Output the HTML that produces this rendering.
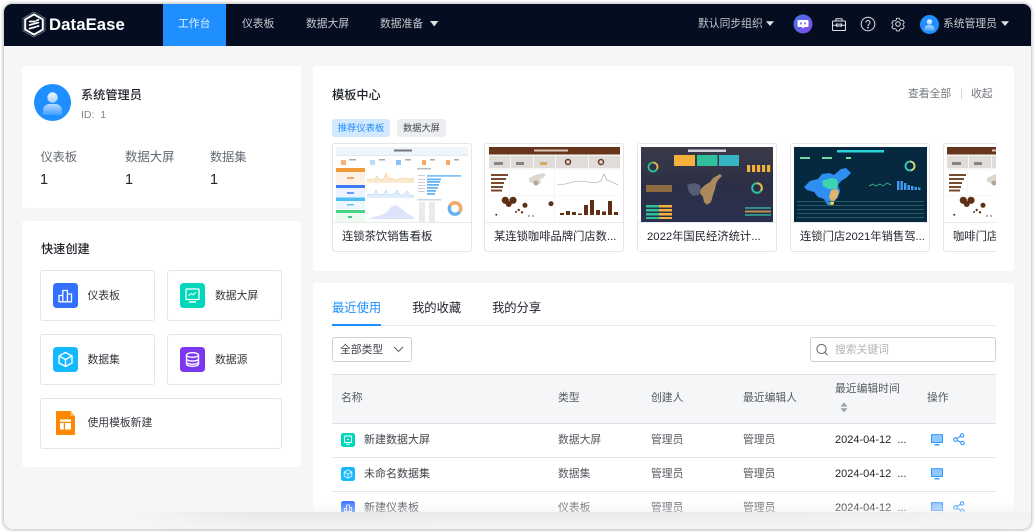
<!DOCTYPE html>
<html lang="zh">
<head>
<meta charset="utf-8">
<title>DataEase</title>
<style>
html,body{margin:0;padding:0;width:1035px;height:532px;overflow:hidden;background:#fff}
*{box-sizing:border-box}
body{position:relative;font-family:"Liberation Sans","Noto Sans CJK SC",sans-serif;color:#1f2329;filter:blur(.3px)}
.a{position:absolute;white-space:nowrap;line-height:1}
svg{position:absolute;display:block;overflow:hidden}
#win{position:absolute;left:4px;top:4px;width:1027px;height:525px;background:#f5f6f8;border-radius:8px 8px 9px 9px;box-shadow:0 0 3px 1px rgba(0,0,0,.28);overflow:hidden}
#nav{position:absolute;left:4px;top:4px;width:1027px;height:42px;background:#050e21;border-radius:8px 8px 0 0}
.card{position:absolute;background:#fff;border-radius:3px}
.nt{color:#c4c7cc;font-size:11.5px}
.btn{position:absolute;background:#fff;border:1px solid #e3e5e8;border-radius:3px}
.ic{position:absolute;width:25px;height:25px;border-radius:3.5px}
.bt{font-size:11.5px;color:#33373d}
.tc{position:absolute;top:143px;width:140px;height:109px;background:#fff;border:1px solid #e3e5e8;border-radius:3px;overflow:hidden}
.tc .d{position:absolute;left:0;right:0;top:78px;height:1px;background:#e8e9eb}
.tt{position:absolute;left:9px;top:88px;font-size:11.3px;line-height:1;color:#1f2329;white-space:nowrap}
.th{font-size:10.8px;color:#55595f}
.td{font-size:11px;color:#55595f}
.hl{position:absolute;left:332px;width:664px;height:1px;background:#e4e5e8}
</style>
</head>
<body>
<div id="win"></div>
<div id="nav"></div>

<!-- logo -->
<svg style="left:22px;top:11px" width="24" height="27" viewBox="0 0 24 27">
<path d="M12 1 L23 7.2 V19.8 L12 26 L1 19.8 V7.2Z" fill="none" stroke="#8d95a3" stroke-width=".6"/>
<path d="M12 3.4 L20.8 8.4 V18.6 L12 23.6 L3.2 18.6 V8.4Z" fill="none" stroke="#fff" stroke-width="2"/>
<path d="M7.5 10.5h5.5M14.5 9.5l2-.8M7.5 14l9-2.4M7.5 17.6l6-1.6M15 15.4l1.6-.4" stroke="#fff" stroke-width="1.7" fill="none" stroke-linecap="round"/>
</svg>
<div class="a" style="left:49px;top:16.5px;font-size:16.7px;font-weight:700;color:#fff;letter-spacing:.1px">DataEase</div>

<div style="position:absolute;left:163px;top:4px;width:63px;height:42px;background:#1f8fff"></div>
<div class="a" style="left:178px;top:19px;font-size:10.8px;color:#e4f1ff">工作台</div>
<div class="a nt" style="left:242px;top:19px;font-size:10.8px">仪表板</div>
<div class="a nt" style="left:306px;top:19px;font-size:10.8px">数据大屏</div>
<div class="a nt" style="left:380px;top:19px;font-size:10.8px">数据准备</div>
<svg style="left:430px;top:21px" width="9" height="6"><path d="M0 0H8.4L4.2 5.4Z" fill="#dfe1e4"/></svg>

<div class="a nt" style="left:698px;top:19px;font-size:10.8px">默认同步组织</div>
<svg style="left:766px;top:21px" width="9" height="6"><path d="M0 .2H8L4 5Z" fill="#dfe1e4"/></svg>
<svg style="left:793px;top:14px" width="20" height="20" viewBox="0 0 20 20">
<defs><linearGradient id="bg" x1="0" y1="0" x2="1" y2="1"><stop offset="0" stop-color="#3b7bf0"/><stop offset="1" stop-color="#8a43e6"/></linearGradient></defs>
<circle cx="10" cy="10" r="9.5" fill="url(#bg)"/>
<path d="M5.5 6h9a1 1 0 0 1 1 1v5a1 1 0 0 1-1 1h-3l-1.4 1.6L8.8 13H5.5a1 1 0 0 1-1-1V7a1 1 0 0 1 1-1Z" fill="#fff"/>
<rect x="7.2" y="8.4" width="1.6" height="2" fill="#6a5ae8"/><rect x="11.2" y="8.4" width="1.6" height="2" fill="#6a5ae8"/>
</svg>
<svg style="left:831px;top:17px" width="16" height="15" viewBox="0 0 16 15" fill="none" stroke="#dfe1e4" stroke-width="1">
<rect x="1.5" y="4" width="13" height="9.5" rx=".8"/>
<path d="M5 4V1.8h6V4M1.5 8.2h4M10.5 8.2h4"/><rect x="5.5" y="7" width="1.6" height="2.2"/><rect x="8.9" y="7" width="1.6" height="2.2"/>
</svg>
<svg style="left:860px;top:16px" width="16" height="16" viewBox="0 0 16 16" fill="none" stroke="#dfe1e4" stroke-width="1">
<circle cx="8" cy="8" r="6.8"/>
<path d="M6 6.4a2 2 0 1 1 3.1 1.7c-.8.5-1.1.9-1.1 1.7" stroke-linecap="round"/><circle cx="8" cy="11.6" r=".4" fill="#dfe1e4"/>
</svg>
<svg style="left:890px;top:16px" width="16" height="16" viewBox="0 0 16 16" fill="none" stroke="#dfe1e4" stroke-width="1">
<path d="M6.3 1.6h3.4l.5 1.8 1.7 1 1.8-.5 1.7 2.9-1.3 1.3v1.900l1.3 1.300-1.700 2.900-1.800-.5-1.700 1-.5 1.800H6.300l-.5-1.800-1.700-1-1.800.5L.6 11.800l1.300-1.300V8.600L.6 7.300l1.700-2.900 1.800.5 1.700-1Z" transform="translate(1.200 .9) scale(.85)" stroke-linejoin="round"/><circle cx="8" cy="8" r="2.300"/>
</svg>
<svg style="left:920px;top:15px" width="19" height="19" viewBox="0 0 37 37">
<defs><linearGradient id="pg" x1="0" y1="0" x2="0" y2="1"><stop offset="0" stop-color="#eef7ff"/><stop offset="1" stop-color="#a9d3ff"/></linearGradient>
<linearGradient id="pg2" x1="0" y1="0" x2="0" y2="1"><stop offset="0" stop-color="#b5daff"/><stop offset="1" stop-color="#3f9fff"/></linearGradient></defs>
<circle cx="18.5" cy="18.5" r="18.5" fill="#1f8fff"/><circle cx="18.5" cy="13.5" r="5.2" fill="url(#pg)"/><path d="M9 31v-4.500a6.500 6.500 0 0 1 6.500-6.500h6a6.500 6.500 0 0 1 6.500 6.500V31H9Z" fill="url(#pg2)"/>
</svg>
<div class="a nt" style="left:943px;top:19px;font-size:10.8px">系统管理员</div>
<svg style="left:1001px;top:21px" width="9" height="6"><path d="M0 .2H8L4 5Z" fill="#dfe1e4"/></svg>

<!-- profile card -->
<div class="card" style="left:22px;top:66px;width:279px;height:142px"></div>
<svg style="left:34px;top:84px" width="37" height="37" viewBox="0 0 37 37">
<circle cx="18.5" cy="18.5" r="18.5" fill="#1f8fff"/><circle cx="18.5" cy="13.5" r="5.2" fill="url(#pg)"/><path d="M9 31v-4.500a6.500 6.500 0 0 1 6.500-6.500h6a6.500 6.500 0 0 1 6.500 6.500V31H9Z" fill="url(#pg2)"/>
</svg>
<div class="a" style="left:81px;top:89px;font-size:12.2px;font-weight:500;color:#1f2329">系统管理员</div>
<div class="a" style="left:81px;top:110px;font-size:10.5px;color:#80848a">ID:&nbsp; 1</div>
<div class="a" style="left:40.5px;top:151px;font-size:12.2px;color:#646a73">仪表板</div>
<div class="a" style="left:125px;top:151px;font-size:12.4px;color:#646a73">数据大屏</div>
<div class="a" style="left:210px;top:151px;font-size:12.2px;color:#646a73">数据集</div>
<div class="a" style="left:40px;top:172.5px;font-size:14.5px;color:#1f2329">1</div>
<div class="a" style="left:125px;top:172.5px;font-size:14.5px;color:#1f2329">1</div>
<div class="a" style="left:210px;top:172.5px;font-size:14.5px;color:#1f2329">1</div>

<!-- quick create -->
<div class="card" style="left:22px;top:221px;width:279px;height:246px"></div>
<div class="a" style="left:41px;top:243px;font-size:12.2px;font-weight:500;color:#1f2329">快速创建</div>
<div class="btn" style="left:40px;top:270px;width:115px;height:51px"></div>
<div class="btn" style="left:167px;top:270px;width:115px;height:51px"></div>
<div class="btn" style="left:40px;top:334px;width:115px;height:51px"></div>
<div class="btn" style="left:167px;top:334px;width:115px;height:51px"></div>
<div class="btn" style="left:40px;top:398px;width:242px;height:51px"></div>

<div class="ic" style="left:53px;top:283px;background:#3370ff"></div>
<svg style="left:53px;top:283px" width="25" height="25" fill="none" stroke="#fff" stroke-width="1.3"><path d="M6 18.5V12.5H9.800M9.800 18.5V7.500H14.400V18.5M14.400 11H18.5V18.500M5.500 18.800H19"/></svg>
<div class="ic" style="left:180px;top:283px;background:#00d6b9"></div>
<svg style="left:180px;top:283px" width="25" height="25" fill="none" stroke="#fff" stroke-width="1.3"><rect x="6" y="6" width="13" height="10.500" rx=".6"/><path d="M8.500 12.800l2.500-2.300 2 1.400 3-2.800" stroke-width="1"/><path d="M9 19h7" stroke-width="1.500"/></svg>
<div class="ic" style="left:53px;top:347px;background:#14b8ff"></div>
<svg style="left:53px;top:347px" width="25" height="25" fill="none" stroke="#fff" stroke-width="1.4" stroke-linejoin="round"><path d="M12.500 5.500 19 9V16L12.500 19.500 6 16V9ZM6 9l6.500 3.500L19 9M12.500 12.500V19.500"/></svg>
<div class="ic" style="left:180px;top:347px;background:#7a39f0"></div>
<svg style="left:180px;top:347px" width="25" height="25" fill="none" stroke="#fff" stroke-width="1.4"><ellipse cx="12.500" cy="8" rx="6" ry="2.300"/><path d="M6.500 8v9c0 1.300 2.700 2.300 6 2.300s6-1 6-2.300V8M6.500 11.800c0 1.300 2.700 2.300 6 2.300s6-1 6-2.300M6.500 15c0 1.300 2.700 2.300 6 2.300s6-1 6-2.300"/></svg>
<svg style="left:56px;top:411px" width="20" height="24" viewBox="0 0 20 24"><path d="M1 0H14.500L19 5V23a1 1 0 0 1-1 1H1a1 1 0 0 1-1-1V1a1 1 0 0 1 1-1Z" fill="#ff8800"/><path d="M14.500 0 19 5H14.500Z" fill="#ffb866"/><path d="M4 8.500H15V10.800H4ZM4 12H7.800V18.500H4ZM9 12H15V18.500H9Z" fill="#fff"/></svg>

<div class="a bt" style="left:87.5px;top:290.500px;font-size:10.8px">仪表板</div>
<div class="a bt" style="left:215px;top:290.500px;font-size:10.8px">数据大屏</div>
<div class="a bt" style="left:87.5px;top:354.500px;font-size:10.8px">数据集</div>
<div class="a bt" style="left:215px;top:354.500px;font-size:10.8px">数据源</div>
<div class="a bt" style="left:87.5px;top:418px;font-size:10.8px">使用模板新建</div>

<!-- templates -->
<div class="card" style="left:313px;top:66px;width:701px;height:205px"></div>
<div class="a" style="left:332px;top:88.500px;font-size:12.2px;font-weight:500">模板中心</div>
<div class="a" style="left:908px;top:89px;font-size:10.8px;color:#73777d">查看全部</div>
<div style="position:absolute;left:961px;top:88px;width:1px;height:11px;background:#d5d7da"></div>
<div class="a" style="left:971px;top:89px;font-size:10.8px;color:#73777d">收起</div>
<div class="a" style="left:332px;top:119px;width:58px;height:18px;background:#d2e9fd;border-radius:3px;color:#1f8fff;font-size:9.3px;line-height:19px;text-align:center">推荐仪表板</div>
<div class="a" style="left:397px;top:119px;width:49px;height:18px;background:#ecedef;border-radius:3px;color:#41454b;font-size:9.2px;line-height:19px;text-align:center">数据大屏</div>

<svg width="0" height="0" style="left:0;top:0"><defs>
<symbol id="coffee" viewBox="0 0 131 75" overflow="hidden">
<rect width="131" height="75" fill="#f7f6f5"/>
<rect width="131" height="7.500" fill="#66351b"/>
<rect x="45" y="2.500" width="34" height="2" fill="#d9c6b9"/>
<g fill="#dfdcd9"><rect y="9" width="21" height="12"/><rect x="22" y="9" width="22" height="12"/><rect x="45" y="9" width="21" height="12"/><rect x="67" y="9" width="32" height="12"/><rect x="100" y="9" width="31" height="12"/></g>
<g fill="#8a8580"><rect x="5" y="15" width="9" height="3"/><rect x="27" y="15" width="8" height="3"/></g><rect x="51" y="15" width="7" height="3" fill="#d7a95a"/>
<g fill="none" stroke="#6b3a1e" stroke-width="1.500"><circle cx="79" cy="15" r="2.500"/><circle cx="112" cy="15" r="2.500"/></g>
<rect y="23" width="20" height="25" fill="#fff"/><rect x="21" y="23" width="44" height="25" fill="#fff"/><rect x="66" y="23" width="65" height="25" fill="#fff"/><rect y="49" width="65" height="26" fill="#fff"/><rect x="66" y="49" width="65" height="26" fill="#fff"/>
<g fill="#7a4a2e"><rect x="2" y="27" width="17" height="2"/><rect x="2" y="31" width="15" height="2"/><rect x="2" y="35" width="13" height="2"/><rect x="2" y="39" width="12" height="2"/><rect x="2" y="42.500" width="11" height="2"/></g>
<path d="M40 31l6-3 8-2 3 2-3 3-3 1 1 4-5 3-3-3-4-1Z" fill="#dcd7d0"/><circle cx="47" cy="36" r="2.500" fill="#b5a696"/>
<path d="M68 38l8-1 8-2 8-1 8 1 6 1 6-2 3-7 3 6 5 2 6 3" fill="none" stroke="#a89c94" stroke-width=".6"/>
<g fill="#5e2f16"><circle cx="16.300" cy="53.300" r="3.600"/><circle cx="24" cy="53.300" r="3.600"/><circle cx="19.700" cy="57" r="3"/><circle cx="36" cy="58.300" r="2.500"/><circle cx="62" cy="56.700" r="2.500"/><circle cx="29.700" cy="63" r="1.200"/><circle cx="27" cy="65" r="1"/><circle cx="33" cy="65.300" r="1.200"/><circle cx="7.300" cy="67.700" r="1"/><circle cx="40" cy="69" r=".7"/><circle cx="44" cy="69" r=".7"/></g>
<g fill="#5e2f16"><rect x="71" y="66" width="4" height="2"/><rect x="77" y="64" width="4" height="4"/><rect x="83" y="65" width="4" height="3"/><rect x="89" y="66.500" width="4" height="1.500"/><rect x="95" y="58" width="4" height="10"/><rect x="101" y="53" width="4" height="15"/><rect x="107" y="63" width="4" height="5"/><rect x="113" y="64.500" width="4" height="3.500"/><rect x="119" y="54" width="4" height="14"/><rect x="125" y="65" width="4" height="3"/></g>
</symbol>
<linearGradient id="dk" x1="0" y1="0" x2="0" y2="1"><stop offset="0" stop-color="#3a3a48"/><stop offset=".5" stop-color="#2c2f46"/><stop offset="1" stop-color="#2a3050"/></linearGradient>
</defs></svg>

<div class="tc" style="left:332px">
<svg style="left:3px;top:3px;filter:blur(.25px)" width="132" height="75" viewBox="0 0 132 75">
<rect width="132" height="75" fill="#fff"/><rect width="132" height="8" fill="#eef6fd"/><rect y="8" width="132" height=".7" fill="#cfe2f5"/>
<rect x="58" y="2.500" width="18" height="2" fill="#777"/>
<rect x="5" y="13" width="5" height="5" fill="#f7b27a"/><rect x="13" y="12" width="7" height="1.500" fill="#aaa"/>
<rect x="34" y="13" width="5" height="5" fill="#bcdcf7"/><rect x="43" y="12" width="6" height="1.500" fill="#aaa"/>
<rect x="60" y="13" width="5" height="5" fill="#8cc3f5"/><rect x="69" y="12" width="6" height="1.500" fill="#aaa"/>
<rect x="86" y="13" width="4" height="5" fill="#f7a862"/><rect x="94" y="12" width="5" height="1.500" fill="#aaa"/>
<rect x="110" y="13" width="4" height="5" fill="#f7a862"/><rect x="118" y="12" width="5" height="1.500" fill="#aaa"/>
<rect y="25" width="29" height="13" fill="#fdf1e6"/><rect y="21" width="29" height="4" fill="#f39a3a"/><rect x="11" y="30" width="7" height="2" fill="#f5a75c"/>
<rect y="41" width="29" height="10" fill="#eef4ff"/><rect y="38" width="29" height="3" fill="#3e7bf3"/><rect x="11" y="45" width="7" height="2" fill="#6a9cf5"/>
<rect y="54" width="29" height="8" fill="#ecf8fd"/><rect y="50.500" width="29" height="3.500" fill="#4cc0f2"/><rect x="11" y="57" width="7" height="1.500" fill="#66c7f2"/>
<rect y="66" width="29" height="9" fill="#edfaf2"/><rect y="63" width="29" height="3" fill="#47d488"/><rect x="12" y="69" width="4" height="2" fill="#47c47e"/>
<path d="M31 36V33l4-1 3 1 3-4 2 3 4 1 3-7 3 5 4 1 3 1 4-2 3 1 4-1 3 1 4-1V36Z" fill="#fbe9d0"/><path d="M31 33l4-1 3 1 3-4 2 3 4 1 3-7 3 5 4 1 3 1 4-2 3 1 4-1 3 1 4-1" fill="none" stroke="#f3c383" stroke-width=".5"/>
<path d="M31 51V48l5-1 2 1 2-5 2 4 5 1 3-5 3 5 5-1 3-4 3 5 4 0 3-4 3 4 4 1V51Z" fill="#e0eefb"/><path d="M31 48l5-1 2 1 2-5 2 4 5 1 3-5 3 5 5-1 3-4 3 5 4 0 3-4 3 4 4 1" fill="none" stroke="#a9d0f5" stroke-width=".5"/>
<path d="M33 71 42 69 50 66 55 60 60 58 66 62 72 67 78 70V72H33Z" fill="#dfe3fa"/>
<rect x="81" y="21" width="14" height="1.500" fill="#bbb"/>
<g fill="#64b3f4"><rect x="91" y="28" width="34" height="1.800" opacity=".8"/><rect x="91" y="31.500" width="14" height="1.800"/><rect x="91" y="34" width="13" height="1.800"/><rect x="91" y="37" width="12" height="1.800"/><rect x="91" y="40" width="11" height="1.800"/><rect x="91" y="43" width="9" height="1.800"/><rect x="91" y="46" width="8" height="1.800"/></g>
<g fill="#ccc"><rect x="82" y="28" width="7" height="1"/><rect x="82" y="32" width="7" height="1"/><rect x="82" y="35" width="7" height="1"/><rect x="82" y="38" width="7" height="1"/><rect x="82" y="41" width="7" height="1"/><rect x="82" y="44" width="7" height="1"/></g>
<rect x="81" y="52" width="24" height="1.500" fill="#c4d6e8"/><g fill="#ebebeb"><rect x="83" y="55" width="6" height="20"/><rect x="93" y="55" width="6" height="20"/></g>
<circle cx="119" cy="61.500" r="5.700" fill="none" stroke="#64b3f4" stroke-width="3.400"/><path d="M119 55.800a5.700 5.700 0 0 1 4.500 9.200" fill="none" stroke="#f7a862" stroke-width="3.400"/><path d="M114 59a5.700 5.700 0 0 1 5-3.200" fill="none" stroke="#f7a862" stroke-width="3.400"/>
</svg>
<div class="d"></div><div class="tt">连锁茶饮销售看板</div></div>

<div class="tc" style="left:484px">
<svg style="left:4px;top:3px;filter:blur(.25px)" width="131" height="75"><use href="#coffee" width="131" height="75"/></svg>
<div class="d"></div><div class="tt">某连锁咖啡品牌门店数...</div></div>

<div class="tc" style="left:637px">
<svg style="left:3px;top:3px;filter:blur(.25px)" width="132" height="75" viewBox="0 0 132 75">
<rect width="132" height="75" fill="url(#dk)"/>
<rect x="47" y="2.500" width="38" height="2.500" fill="#cfd2da"/>
<rect x="33" y="8" width="21" height="11" fill="#f6b13d"/><rect x="56" y="8" width="20.500" height="11" fill="#2fbf9a"/><rect x="78" y="8" width="20" height="11" fill="#36b5c4"/>
<circle cx="12" cy="20" r="4.500" fill="none" stroke="#2fbf9a" stroke-width="1.800"/><path d="M12 15.500a4.500 4.500 0 0 1 4 6.500" fill="none" stroke="#f6b13d" stroke-width="1.800"/>
<rect x="5" y="38" width="26" height="7" fill="#b5843f" opacity=".7"/>
<g fill="#2fbf9a"><rect x="5" y="58" width="13" height="2.500"/><rect x="5" y="62" width="13" height="2.500"/><rect x="5" y="66" width="13" height="2.500"/><rect x="5" y="70" width="13" height="2"/></g>
<g fill="#f6b13d"><rect x="18" y="58" width="13" height="2.500"/><rect x="18" y="62" width="13" height="2.500"/><rect x="18" y="66" width="13" height="2.500"/><rect x="18" y="70" width="13" height="2"/></g>
<path d="M46 38l7-2 6 2 1 5-2 5-6 1-4-4Z" fill="#565c74"/>
<path d="M60 42l4-4 5-3 3-4 7-4 2 2-4 4-2 4-1 5-2 6-2 7-4 3-3-3-1-5-3-4Z" fill="#b8935f" opacity=".9"/>
<g fill="#f6b13d"><rect x="106" y="18" width="3.200" height="7"/><rect x="111" y="18" width="3.200" height="7"/><rect x="116" y="18" width="3.200" height="7"/><rect x="121" y="18" width="3.200" height="7"/><rect x="126" y="18" width="3.200" height="7"/></g>
<circle cx="116" cy="41" r="4.800" fill="none" stroke="#2fbf9a" stroke-width="2"/><path d="M116 36.200a4.800 4.800 0 0 1 4 7.500" fill="none" stroke="#f6b13d" stroke-width="2"/>
<g fill="#2f8f86"><rect x="104" y="60" width="26" height="2"/><rect x="104" y="67" width="26" height="2"/></g><g fill="#b8914f"><rect x="104" y="63.500" width="26" height="2"/></g>
</svg>
<div class="d"></div><div class="tt">2022年国民经济统计...</div></div>

<div class="tc" style="left:790px">
<svg style="left:3px;top:3px;filter:blur(.25px)" width="133" height="75" viewBox="0 0 133 75">
<rect width="133" height="75" fill="#07293f"/>
<rect x="43" y="3" width="47" height="2.500" fill="#24d4d8"/>
<rect x="6" y="10" width="10" height="2" fill="#6fdc9a"/><rect x="28" y="10" width="10" height="2" fill="#6fdc9a"/><rect x="52" y="10" width="5" height="2" fill="#6fdc9a"/>
<path d="M10 40 16 34 24 32 28 27 35 26 40 28 47 22 52 21 57 26 52 31 47 34 44 38 46 44 44 50 40 55 35 59 32 56 30 52 24 50 20 45 13 43Z" fill="#2f8ff0"/>
<path d="M28 34l9-3 6 1 1 6-2 4-7 0-6-3Z" fill="#3fd4b0"/><path d="M37 43l6-1 2 3-2 6-5 4-3-5Z" fill="#e0b46a"/><path d="M36 55l4-1 0 3-3 2Z" fill="#f5cf3a"/>
<circle cx="116" cy="19" r="4.500" fill="none" stroke="#2fd0c0" stroke-width="1.800"/><path d="M116 14.500a4.500 4.500 0 0 1 1 8.900" fill="none" stroke="#e7d870" stroke-width="1.800"/>
<path d="M75 39l4-2 3 2 4-2 3 2 4-3 4 2" fill="none" stroke="#47d49a" stroke-width=".7"/>
<g fill="#3f9cf2"><rect x="103" y="34" width="2.400" height="9"/><rect x="106.500" y="34" width="2.400" height="9"/><rect x="110" y="36" width="2.400" height="7"/><rect x="113.500" y="38" width="2.400" height="5"/><rect x="117" y="39" width="2.400" height="4"/><rect x="120.500" y="40" width="2.400" height="3"/><rect x="124" y="40.500" width="2.400" height="2.500"/></g>
<g fill="#2b6a6e"><rect x="3" y="54" width="127" height=".8"/><rect x="3" y="58" width="127" height=".8"/><rect x="3" y="62" width="127" height=".8"/><rect x="3" y="66" width="127" height=".8"/><rect x="3" y="70" width="127" height=".8"/></g>
</svg>
<div class="d"></div><div class="tt">连锁门店2021年销售驾...</div></div>

<div style="position:absolute;left:943px;top:143px;width:53px;height:109px;overflow:hidden">
<div class="tc" style="left:0;top:0">
<svg style="left:3px;top:3px;filter:blur(.25px)" width="131" height="75"><use href="#coffee" width="131" height="75"/></svg>
<div class="d"></div><div class="tt">咖啡门店销售分析</div></div>
</div>

<!-- recent -->
<div class="card" style="left:313px;top:283px;width:701px;height:229px"></div>
<div class="a" style="left:332px;top:302px;font-size:12.3px;color:#1f8fff">最近使用</div>
<div class="a" style="left:412px;top:302px;font-size:12.3px;color:#1f2329">我的收藏</div>
<div class="a" style="left:492px;top:302px;font-size:12.3px;color:#1f2329">我的分享</div>
<div style="position:absolute;left:332px;top:325px;width:664px;height:1px;background:#e8e9eb"></div>
<div style="position:absolute;left:332px;top:324px;width:49px;height:2px;background:#1f8fff"></div>

<div style="position:absolute;left:332px;top:337px;width:80px;height:25px;background:#fff;border:1px solid #cdd0d4;border-radius:3px"></div>
<div class="a" style="left:340px;top:344.500px;font-size:10.8px;color:#41454b">全部类型</div>
<svg style="left:393px;top:346px" width="11" height="7" fill="none" stroke="#555a60" stroke-width=".9"><path d="M1 1l4.500 4.500L10 1"/></svg>
<div style="position:absolute;left:810px;top:337px;width:186px;height:25px;background:#fff;border:1px solid #cdd0d4;border-radius:3px"></div>
<svg style="left:815px;top:343px" width="14" height="14" fill="none" stroke="#5f6368" stroke-width="1"><circle cx="6.500" cy="6" r="4.600"/><path d="M10 9.500l2.600 2.600"/></svg>
<div class="a" style="left:835px;top:344.500px;font-size:10.8px;color:#b2b5b9">搜索关键词</div>

<div style="position:absolute;left:332px;top:375px;width:664px;height:49px;background:#f5f6f8"></div>
<div class="hl" style="top:374px;background:#dedfe2"></div>
<div class="hl" style="top:423px;background:#dedfe2"></div>
<div class="hl" style="top:457px"></div>
<div class="hl" style="top:491px"></div>

<div class="a th" style="left:341px;top:393px">名称</div>
<div class="a th" style="left:558px;top:393px">类型</div>
<div class="a th" style="left:651px;top:393px">创建人</div>
<div class="a th" style="left:743px;top:393px">最近编辑人</div>
<div class="a th" style="left:835px;top:384px">最近编辑时间</div>
<div class="a th" style="left:927px;top:393px">操作</div>
<svg style="left:840px;top:402px" width="8" height="11"><path d="M4 .5 7.500 4.500H.5ZM.5 6.300H7.500L4 10.300Z" fill="#9b9fa5"/></svg>

<!-- row icons -->
<svg style="left:341px;top:433px" width="14" height="14" viewBox="0 0 14 14"><rect width="14" height="14" rx="2.500" fill="#00d6b9"/><rect x="3.500" y="3" width="7" height="6.500" rx=".5" fill="none" stroke="#fff" stroke-width=".9"/><path d="M5 11.200H9M6 6.500h2" stroke="#fff" stroke-width=".9"/></svg>
<svg style="left:341px;top:467px" width="14" height="14" viewBox="0 0 14 14"><rect width="14" height="14" rx="2.500" fill="#14b8ff"/><path d="M7 2.800 10.800 5V9.200L7 11.300 3.200 9.200V5ZM3.200 5 7 7.200 10.800 5M7 7.200v4" fill="none" stroke="#fff" stroke-width=".8"/></svg>
<svg style="left:341px;top:501px" width="14" height="14" viewBox="0 0 14 14"><rect width="14" height="14" rx="2.500" fill="#3370ff"/><path d="M3.500 10.500V7.500H5.500V10.500M5.500 10.500V4H8.500V10.500M8.500 6.500H10.500V10.500M3 10.700H11" fill="none" stroke="#fff" stroke-width=".8"/></svg>

<div class="a td" style="left:364px;top:435px;color:#41454b">新建数据大屏</div>
<div class="a td" style="left:558px;top:435px;font-size:10.8px">数据大屏</div>
<div class="a td" style="left:651px;top:435px;font-size:10.8px">管理员</div>
<div class="a td" style="left:743px;top:435px;font-size:10.8px">管理员</div>
<div class="a td" style="left:835px;top:435px;color:#1f2329;font-size:11px">2024-04-12&nbsp; ...</div>

<div class="a td" style="left:364px;top:469px;color:#41454b">未命名数据集</div>
<div class="a td" style="left:558px;top:469px;font-size:10.8px">数据集</div>
<div class="a td" style="left:651px;top:469px;font-size:10.8px">管理员</div>
<div class="a td" style="left:743px;top:469px;font-size:10.8px">管理员</div>
<div class="a td" style="left:835px;top:469px;color:#1f2329;font-size:11px">2024-04-12&nbsp; ...</div>

<div class="a td" style="left:364px;top:503px;color:#41454b">新建仪表板</div>
<div class="a td" style="left:558px;top:503px;font-size:10.8px">仪表板</div>
<div class="a td" style="left:651px;top:503px;font-size:10.8px">管理员</div>
<div class="a td" style="left:743px;top:503px;font-size:10.8px">管理员</div>
<div class="a td" style="left:835px;top:503px;color:#1f2329;font-size:11px">2024-04-12&nbsp; ...</div>

<!-- action icons -->
<svg style="left:931px;top:434px" width="12" height="12" viewBox="0 0 12 12"><rect x=".5" y=".7" width="11" height="7.800" fill="#8fc7ff" stroke="#1f8fff" stroke-width=".9"/><path d="M3.500 10.800H8.500" stroke="#1f8fff" stroke-width="1.300"/></svg>
<svg style="left:953px;top:433px" width="12" height="13" viewBox="0 0 12 13" fill="none" stroke="#1f8fff" stroke-width="1"><circle cx="2.500" cy="6.500" r="1.800"/><circle cx="9" cy="2.500" r="1.700"/><circle cx="9.500" cy="10" r="1.700"/><path d="M4 5.500 7.500 3.300M4 7.500 8 9.300"/></svg>
<svg style="left:931px;top:468px" width="12" height="12" viewBox="0 0 12 12"><rect x=".5" y=".7" width="11" height="7.800" fill="#8fc7ff" stroke="#1f8fff" stroke-width=".9"/><path d="M3.500 10.800H8.500" stroke="#1f8fff" stroke-width="1.300"/></svg>
<svg style="left:931px;top:502px" width="12" height="12" viewBox="0 0 12 12"><rect x=".5" y=".7" width="11" height="7.800" fill="#8fc7ff" stroke="#1f8fff" stroke-width=".9"/><path d="M3.500 10.800H8.500" stroke="#1f8fff" stroke-width="1.300"/></svg>
<svg style="left:953px;top:501px" width="12" height="13" viewBox="0 0 12 13" fill="none" stroke="#1f8fff" stroke-width="1"><circle cx="2.500" cy="6.500" r="1.800"/><circle cx="9" cy="2.500" r="1.700"/><circle cx="9.500" cy="10" r="1.700"/><path d="M4 5.500 7.500 3.300M4 7.500 8 9.300"/></svg>

<!-- bottom fade and clipping -->
<div style="position:absolute;left:313px;top:500px;width:701px;height:12px;background:linear-gradient(to bottom,rgba(255,255,255,0),rgba(240,240,241,.5))"></div>
<div style="position:absolute;left:4px;top:512px;width:1027px;height:17px;background:#f5f6f8;border-radius:0 0 9px 9px"></div>
<div style="position:absolute;left:4px;top:512px;width:1027px;height:17px;border-radius:0 0 9px 9px;background:linear-gradient(to right,rgba(228,229,230,0) 12%,rgba(228,229,230,.85) 24%,rgba(230,231,232,.85) 60%,rgba(236,237,238,.5) 98%)"></div>
<div style="position:absolute;left:4px;top:512px;width:1027px;height:17px;border-radius:0 0 9px 9px;background:linear-gradient(to bottom,rgba(245,246,248,0),rgba(245,246,248,.9))"></div>
</body>
</html>
